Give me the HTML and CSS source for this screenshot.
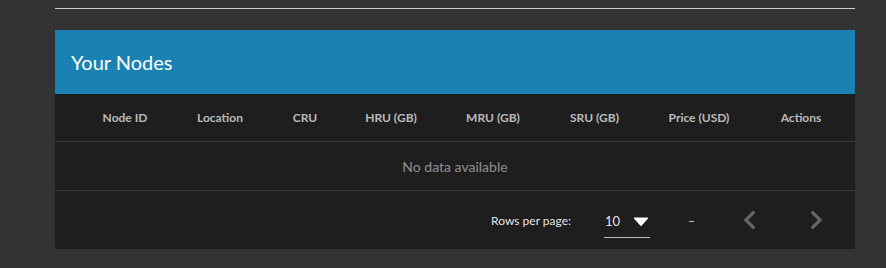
FILE: index.html
```html
<!DOCTYPE html>
<html lang="en">
<head>
    <meta charset="UTF-8">
    <meta name="viewport" content="width=device-width, initial-scale=1.0">
    <title>Your Nodes</title>
    <link rel="stylesheet" href="styles.css">
</head>
<body>
    <div class="page">
        <div class="rule"></div>

        <div class="card">
            <div class="card-title">Your Nodes</div>

            <div class="table-head">
                <span>Node ID</span>
                <span>Location</span>
                <span>CRU</span>
                <span>HRU (GB)</span>
                <span>MRU (GB)</span>
                <span>SRU (GB)</span>
                <span>Price (USD)</span>
                <span>Actions</span>
            </div>

            <div class="table-empty">No data available</div>

            <div class="table-footer">
                <span class="rows-label">Rows per page:</span>
                <div class="rows-select">
                    <span>10</span>
                    <svg class="caret" width="16" height="10" viewBox="0 0 16 10">
                        <path d="M1 1.5 Q0.5 0.5 1.8 0.5 H14.2 Q15.5 0.5 15 1.5 L8.8 8.6 Q8 9.5 7.2 8.6 Z" fill="#fff"/>
                    </svg>
                </div>
                <span class="range">&ndash;</span>
                <button class="page-btn" disabled>
                    <svg width="38" height="38" viewBox="0 0 24 24"><path d="M15.41,16.58L10.83,12L15.41,7.41L14,6L8,12L14,18L15.41,16.58Z"/></svg>
                </button>
                <button class="page-btn" disabled>
                    <svg width="38" height="38" viewBox="0 0 24 24"><path d="M8.59,16.58L13.17,12L8.59,7.41L10,6L16,12L10,18L8.59,16.58Z"/></svg>
                </button>
            </div>
        </div>
    </div>
</body>
</html>
```

FILE: styles.css
```css
body {
    margin: 0;
    background: #333333;
    font-family: Lato, "Open Sans", sans-serif;
    color: #fff;
}
.page {
    width: 800px;
    margin-left: 55px;
    padding-top: 8px;
}
.rule {
    border-top: 1px solid #cfcfcf;
}
.card {
    margin-top: 21px;
    background: #1e1e1e;
    border-radius: 0 0 4px 4px;
    box-shadow: 0 2px 2px rgba(0,0,0,0.25);
    overflow: hidden;
}
.card-title {
    height: 64px;
    display: flex;
    align-items: center;
    padding-left: 16px;
    background: #1a82b2;
    font-size: 20px;
    color: #fff;
}
.table-head {
    display: grid;
    grid-template-columns: 96px 94px 76px 96px 108px 95px 114px 90px;
    align-items: center;
    height: 47px;
    padding-left: 22px;
    border-bottom: 1px solid #3b3b3b;
}
.table-head span {
    text-align: center;
    font-size: 12px;
    font-weight: 700;
    color: rgba(255,255,255,0.7);
}
.table-empty {
    height: 48px;
    display: flex;
    align-items: center;
    justify-content: center;
    font-size: 14px;
    color: rgba(255,255,255,0.5);
    border-bottom: 1px solid #3b3b3b;
}
.table-footer {
    height: 58px;
    display: flex;
    align-items: center;
    justify-content: flex-end;
    padding-right: 20px;
    font-size: 12px;
}
.rows-label {
    color: rgba(255,255,255,0.9);
    margin-right: 33px;
}
.rows-select {
    width: 46px;
    height: 33px;
    margin-top: 2px;
    display: flex;
    align-items: center;
    box-sizing: border-box;
    padding-left: 1px;
    border-bottom: 1px solid #bdbdbd;
    font-size: 13px;
    color: rgba(255,255,255,0.9);
}
.caret {
    margin-left: 13px;
    margin-top: 2px;
}
.range {
    margin-left: 38px;
    margin-right: 36px;
    color: rgba(255,255,255,0.9);
}
.page-btn {
    width: 38px;
    height: 38px;
    padding: 0;
    border: none;
    background: none;
    display: flex;
}
.page-btn + .page-btn {
    margin-left: 28px;
}
.page-btn svg {
    fill: #666666;
}
```
